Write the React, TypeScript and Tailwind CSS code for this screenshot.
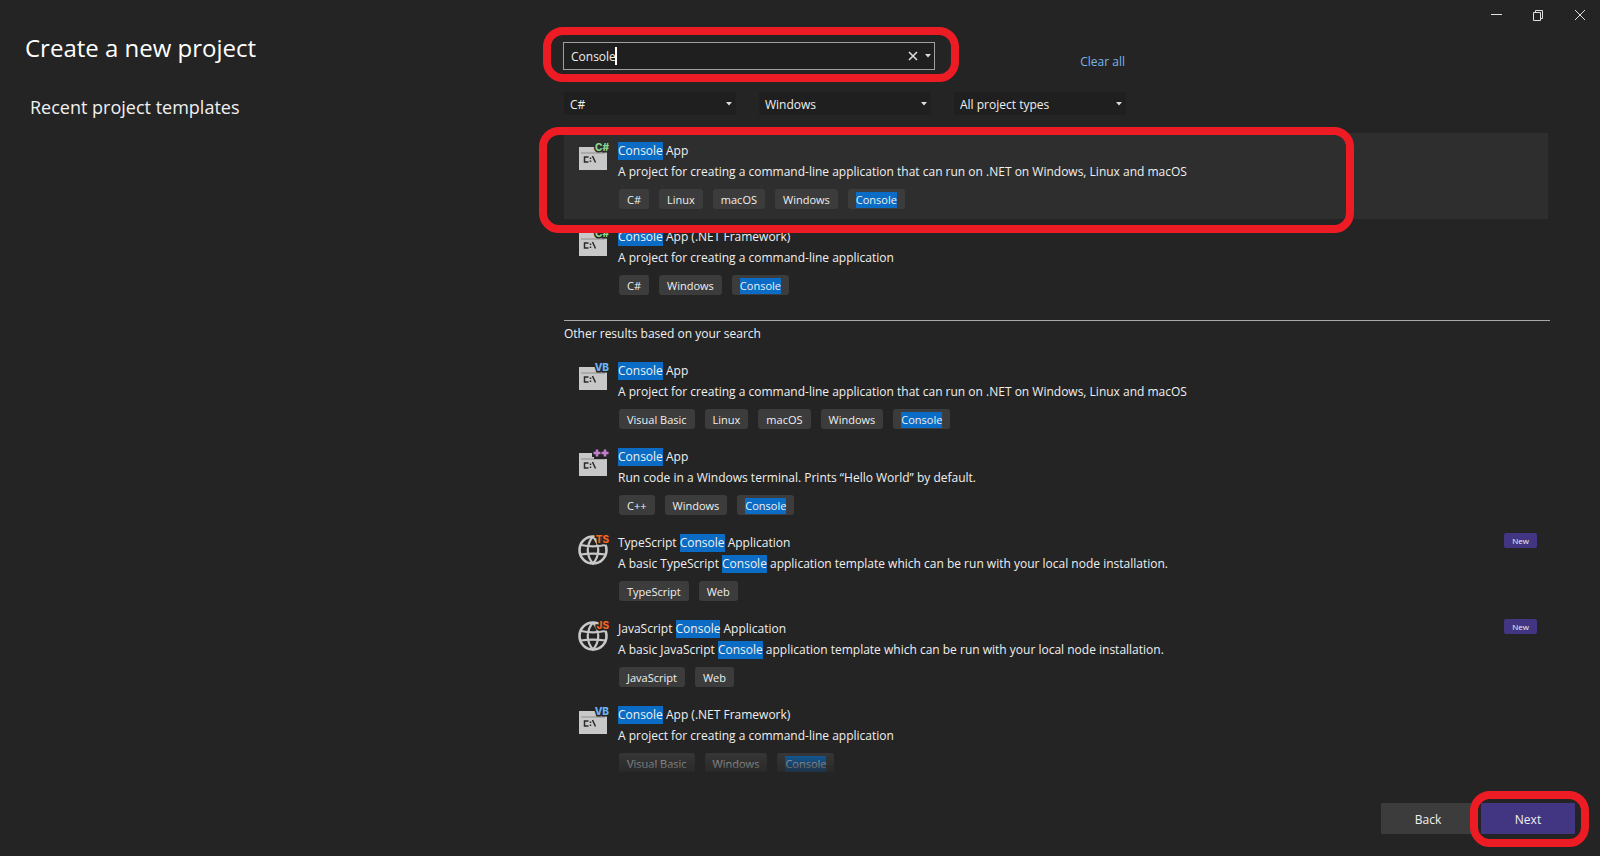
import { Fragment, useState } from 'react';
import type { ReactNode } from 'react';

type IconKind = 'console' | 'web';

type Template = {
  id: string;
  icon: IconKind;
  badge: string;
  badgeColor: string;
  name: string;
  description: string;
  tags: string[];
  isNew?: boolean;
};

const GREEN = '#8ad88a';
const BLUE = '#6cb4f2';
const PURPLE = '#c27fc9';
const ORANGE = '#f26522';

const matches: Template[] = [
  {
    id: 'cs-console',
    icon: 'console',
    badge: 'C#',
    badgeColor: GREEN,
    name: 'Console App',
    description: 'A project for creating a command-line application that can run on .NET on Windows, Linux and macOS',
    tags: ['C#', 'Linux', 'macOS', 'Windows', 'Console'],
  },
  {
    id: 'cs-console-framework',
    icon: 'console',
    badge: 'C#',
    badgeColor: GREEN,
    name: 'Console App (.NET Framework)',
    description: 'A project for creating a command-line application',
    tags: ['C#', 'Windows', 'Console'],
  },
];

const otherResults: Template[] = [
  {
    id: 'vb-console',
    icon: 'console',
    badge: 'VB',
    badgeColor: BLUE,
    name: 'Console App',
    description: 'A project for creating a command-line application that can run on .NET on Windows, Linux and macOS',
    tags: ['Visual Basic', 'Linux', 'macOS', 'Windows', 'Console'],
  },
  {
    id: 'cpp-console',
    icon: 'console',
    badge: '++',
    badgeColor: PURPLE,
    name: 'Console App',
    description: 'Run code in a Windows terminal. Prints “Hello World” by default.',
    tags: ['C++', 'Windows', 'Console'],
  },
  {
    id: 'ts-console',
    icon: 'web',
    badge: 'TS',
    badgeColor: ORANGE,
    name: 'TypeScript Console Application',
    description: 'A basic TypeScript Console application template which can be run with your local node installation.',
    tags: ['TypeScript', 'Web'],
    isNew: true,
  },
  {
    id: 'js-console',
    icon: 'web',
    badge: 'JS',
    badgeColor: ORANGE,
    name: 'JavaScript Console Application',
    description: 'A basic JavaScript Console application template which can be run with your local node installation.',
    tags: ['JavaScript', 'Web'],
    isNew: true,
  },
  {
    id: 'vb-console-framework',
    icon: 'console',
    badge: 'VB',
    badgeColor: BLUE,
    name: 'Console App (.NET Framework)',
    description: 'A project for creating a command-line application',
    tags: ['Visual Basic', 'Windows', 'Console'],
  },
];

export default function App() {
  const [query, setQuery] = useState('Console');
  const [selectedId, setSelectedId] = useState('cs-console');

  return (
    <div className="flex h-screen flex-col overflow-hidden bg-[#242424] font-['Segoe_UI','Open_Sans',sans-serif] text-[12px] leading-[18px] text-[#f0f0f0]">
      <div className="flex min-h-0 flex-1">
        <aside className="w-[564px] shrink-0 pl-[25px] pt-[31px]">
          <h1 className="text-[24px] leading-[34px] text-white">Create a new project</h1>
          <h2 className="ml-[5px] mt-[28px] text-[18px] leading-[28px]">Recent project templates</h2>
        </aside>

        <main className="flex min-w-0 flex-1 flex-col">
          <WindowControls />

          <div className="flex w-[561px] items-start justify-between pt-[12px]">
            <div className="relative -ml-px w-[372px]">
              <input
                aria-label="Search for templates"
                value={query}
                onChange={(e) => setQuery(e.target.value)}
                className="block h-[28px] w-full border border-[#a0a0a0] bg-[#1f1f1f] pl-[7px] pr-12 caret-transparent outline-none"
              />
              <span className="absolute left-[52px] top-[5px] h-[18px] w-[2px] bg-white" />
              <div className="absolute inset-y-0 right-[4px] flex items-center gap-[7px]">
                <button aria-label="Clear search" onClick={() => setQuery('')}>
                  <svg width="10" height="10" viewBox="0 0 10 10" stroke="#dcdcdc" strokeWidth="1.6">
                    <path d="M1 1l8 8M9 1l-8 8" />
                  </svg>
                </button>
                <button aria-label="Search history">
                  <Caret />
                </button>
              </div>
              <Highlight className="-bottom-[12px] -left-[20px] -right-[24px] -top-[15px]" />
            </div>
            <a href="#" className="mt-[11px] text-[#7ab5ee]">Clear all</a>
          </div>

          <div className="mt-[21px] flex gap-[23px]">
            <Filter label="Language" options={['C#', 'C++', 'Visual Basic', 'TypeScript']} />
            <Filter label="Platform" options={['Windows', 'Linux', 'macOS']} />
            <Filter label="Project type" options={['All project types', 'Console', 'Web']} />
          </div>

          <div className="mr-[50px] mt-[18px] min-h-0 flex-1">
            <ul className="mr-[2px]">
              {matches.map((t) => (
                <TemplateRow
                  key={t.id}
                  template={t}
                  query={query}
                  selected={t.id === selectedId}
                  onSelect={() => setSelectedId(t.id)}
                />
              ))}
            </ul>
            <h3 className="mt-[15px] border-t border-[#a8a8a8] pb-[9px] pt-[3px] leading-[20px]">
              Other results based on your search
            </h3>
            <ul className="mr-[2px]">
              {otherResults.map((t) => (
                <TemplateRow
                  key={t.id}
                  template={t}
                  query={query}
                  selected={t.id === selectedId}
                  onSelect={() => setSelectedId(t.id)}
                />
              ))}
            </ul>
          </div>
        </main>
      </div>

      <footer className="relative flex h-[84px] shrink-0 justify-end gap-[6px] bg-[#242424] pr-[25px] pt-[31px]">
        <div className="pointer-events-none absolute inset-x-0 bottom-full h-[20px] bg-linear-to-b from-[#242424]/20 to-[#242424]/80" />
        <button className="h-[31px] w-[94px] bg-[#3c3c3c] pt-[2px]">Back</button>
        <div className="relative h-[31px]">
          <button className="h-[31px] w-[94px] bg-[#423582] pt-[2px]">Next</button>
          <Highlight className="-bottom-[13px] -left-[11px] -right-[14px] -top-[12px]" />
        </div>
      </footer>
    </div>
  );
}

function WindowControls() {
  return (
    <div className="flex h-[30px] items-center justify-end gap-[30px] pr-[14px]">
      <button aria-label="Minimize">
        <svg width="12" height="12" viewBox="0 0 12 12" stroke="#e0e0e0">
          <path d="M1 5.5h11" />
        </svg>
      </button>
      <button aria-label="Restore">
        <svg width="12" height="12" viewBox="0 0 12 12" fill="none" stroke="#e0e0e0">
          <path d="M1.5 3.5h7v8h-7zM3.5 3V1.5h7v8H9" />
        </svg>
      </button>
      <button aria-label="Close">
        <svg width="12" height="12" viewBox="0 0 12 12" stroke="#e0e0e0">
          <path d="M1 1l10 10M11 1L1 11" />
        </svg>
      </button>
    </div>
  );
}

function Filter({ label, options }: { label: string; options: string[] }) {
  return (
    <div className="relative w-[172px]">
      <select aria-label={label} className="block h-[23px] w-full appearance-none bg-[#1f1f1f] pl-[6px] pr-6 pt-[2px] outline-none">
        {options.map((o) => (
          <option key={o}>{o}</option>
        ))}
      </select>
      <div className="pointer-events-none absolute inset-y-0 right-[4px] flex items-center">
        <Caret />
      </div>
    </div>
  );
}

function TemplateRow({ template, query, selected, onSelect }: { template: Template; query: string; selected: boolean; onSelect: () => void }) {
  return (
    <li
      onClick={onSelect}
      className={`relative flex h-[86px] pl-[14px] pr-[11px] pt-[9px] ${selected ? 'z-10 bg-[#2e2e2e]' : ''}`}
    >
      <TemplateIcon kind={template.icon} badge={template.badge} color={template.badgeColor} bg={selected ? '#2e2e2e' : '#242424'} />
      <div className="ml-[8px] min-w-0 flex-1">
        <p>{mark(template.name, query)}</p>
        <p className="mt-[3px] whitespace-nowrap">{mark(template.description, query)}</p>
        <div className="ml-px mt-[8px] flex gap-[10px] text-[11px] leading-[16px]">
          {template.tags.map((tag) => (
            <span key={tag} className="flex h-[20px] items-center rounded-[3px] bg-[#3c3c3c] px-[8px] pt-px">
              {mark(tag, query)}
            </span>
          ))}
        </div>
      </div>
      {template.isNew && (
        <span className="-mt-px h-[15px] w-[33px] rounded-[2px] bg-[#423582] text-center text-[8px] leading-[16px]">New</span>
      )}
      {selected && <Highlight className="-left-[25px] -top-[6px] -bottom-[14px] right-[194px]" />}
    </li>
  );
}

// Wraps every occurrence of the search term in a highlighted span
function mark(text: string, query: string): ReactNode {
  if (!query) return text;
  const parts = text.split(query);
  return parts.map((part, i) => (
    <Fragment key={i}>
      {i > 0 && <span className="inline-block bg-[#0a6cc4]">{query}</span>}
      {part}
    </Fragment>
  ));
}

function Highlight({ className }: { className: string }) {
  return <div className={`pointer-events-none absolute z-20 rounded-[20px] border-8 border-[#ed1c24] ${className}`} />;
}

function Caret() {
  return (
    <svg width="6" height="4" viewBox="0 0 6 4" fill="#dcdcdc">
      <path d="M0 0h6L3 3.5z" />
    </svg>
  );
}

function TemplateIcon({ kind, badge, color, bg }: { kind: IconKind; badge: string; color: string; bg: string }) {
  return (
    <svg className="shrink-0 overflow-visible" width="32" height="32" viewBox="0 0 32 32">
      {kind === 'console' ? (
        <>
          <rect x="1" y="5" width="28" height="23" fill="#c8c8c8" />
          <path d="M3 11h24" stroke="#8c8c8c" />
          <path d="M10.5 15H6.5v5h4M12.5 15.5V17M12.5 18.5V20M14.5 14l3 6.5" fill="none" stroke="#2a2a2a" strokeWidth="1.5" />
        </>
      ) : (
        <g fill="none" stroke="#c8c8c8" strokeWidth="2.6">
          <circle cx="15" cy="16" r="13.5" />
          <path d="M15 2.5c-7 8-7 19 0 27c7-8 7-19 0-27M3 11c7 1.5 17 1.5 24 0M2.5 20.5c8-1 17-1 25 0" strokeWidth="2.2" />
        </g>
      )}
      {badge === '++' ? (
        <>
          <path d="M14 0h18v9h-3v2H16V9h-2z" fill={bg} />
          <path d="M19 1.5v7M15.5 5h7M27 1.5v7M23.5 5h7" stroke={color} strokeWidth="2.6" />
        </>
      ) : (
        <g className="font-['Inter',sans-serif]" textAnchor="end" fontSize="10" fontWeight="800">
          <text x="31" y="9" fill={bg} stroke={bg} strokeWidth="3">{badge}</text>
          <text x="31" y="9" fill={color}>{badge}</text>
        </g>
      )}
    </svg>
  );
}
